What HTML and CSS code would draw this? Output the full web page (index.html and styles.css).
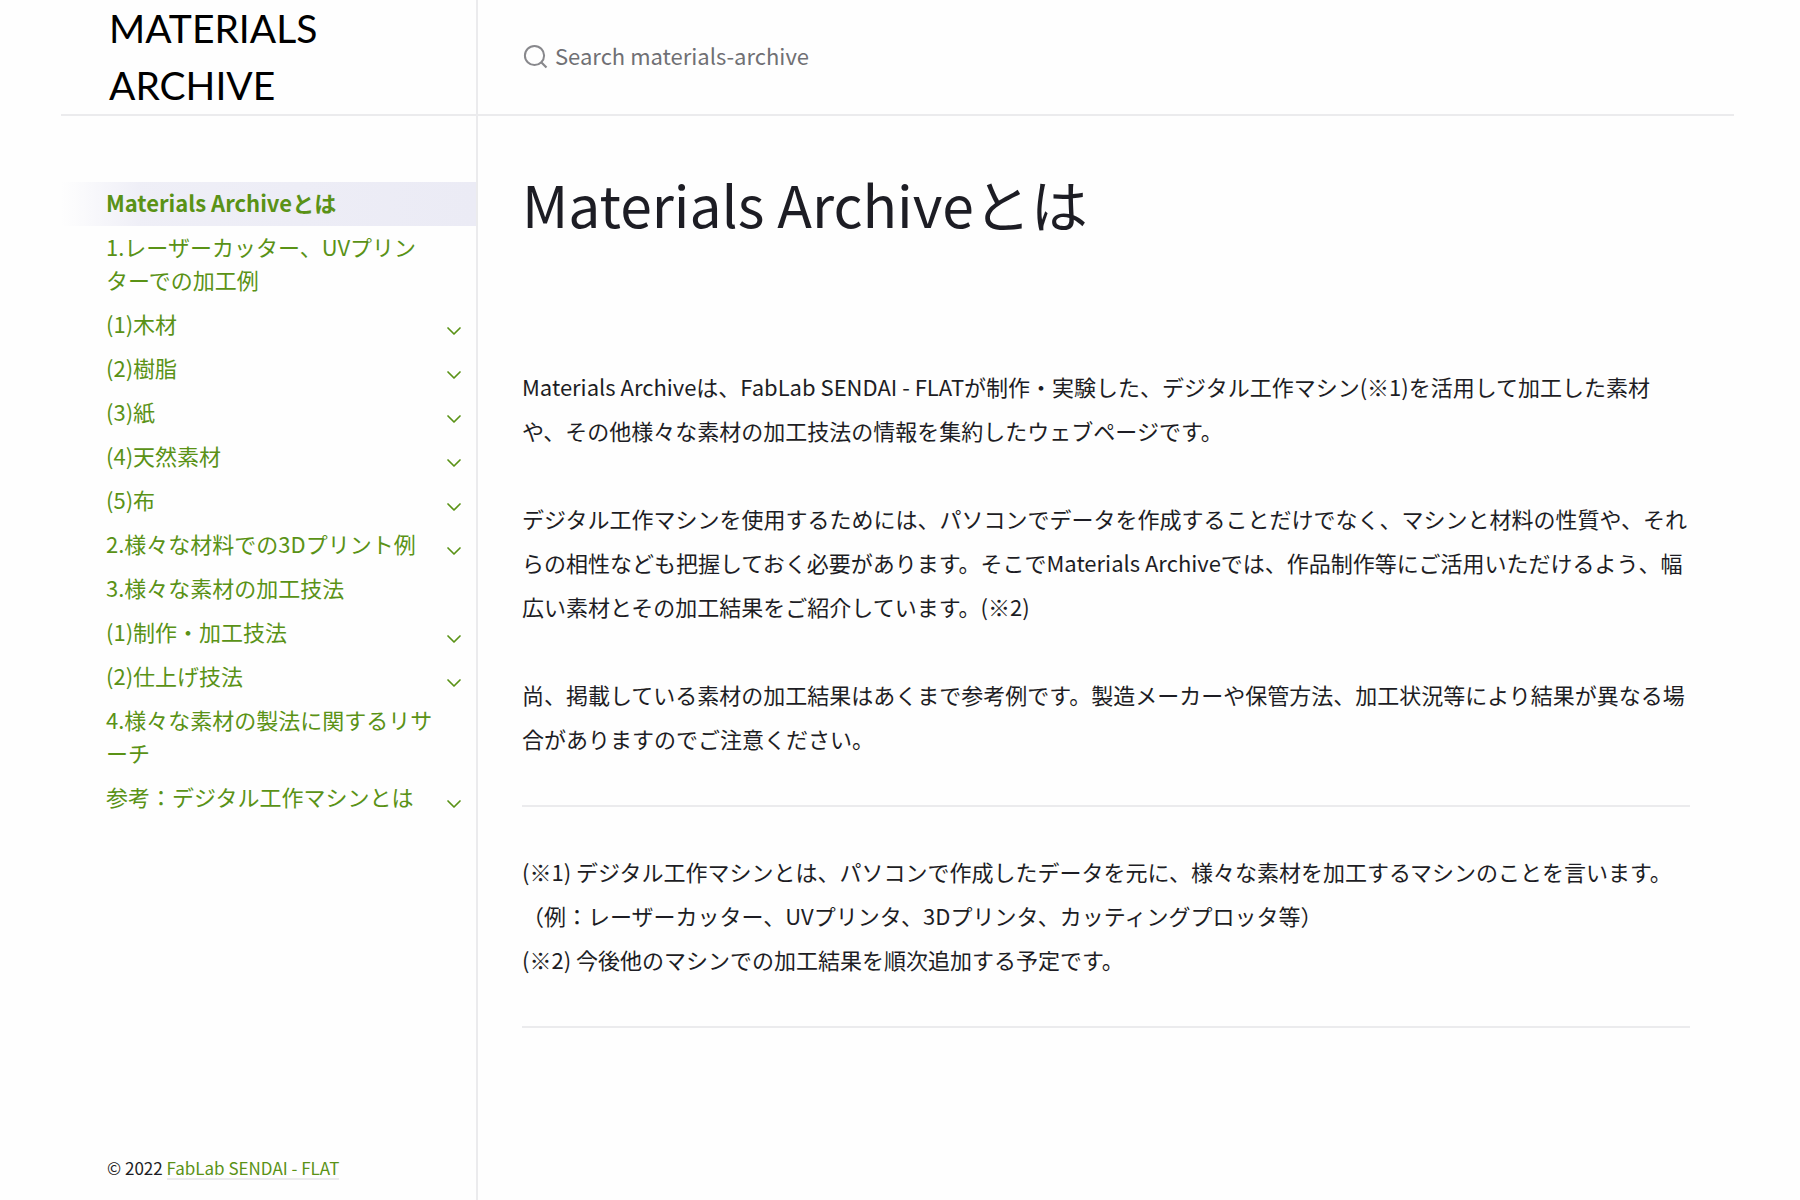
FILE: index.html
```html
<!DOCTYPE html>
<html lang="ja">
<head>
<meta charset="utf-8">
<meta name="viewport" content="width=device-width, initial-scale=1">
<title>Materials Archiveとは</title>
<link rel="stylesheet" href="styles.css">
</head>
<body>
<svg class="symbols" aria-hidden="true">
  <symbol id="chevron" viewBox="0 0 16 16"><path d="M2 5l6 6 6-6" fill="none" stroke="currentColor" stroke-width="1.7" stroke-linecap="round" stroke-linejoin="round"/></symbol>
</svg>
<div class="page">
  <aside class="sidebar">
    <div class="brand"><a class="brand-link" href="#">MATERIALS ARCHIVE</a></div>
    <nav class="nav" aria-label="メニュー">
      <ul class="nav-list">
        <li class="nav-item active"><a class="nav-link" href="#" aria-current="page">Materials Archiveとは</a></li>
        <li class="nav-item"><a class="nav-link" href="#">1.レーザーカッター、UVプリンターでの加工例</a></li>
        <li class="nav-item"><a class="nav-link" href="#">(1)木材</a><button class="toggle" type="button" aria-label="(1)木材を開く"><svg class="chevron"><use href="#chevron"/></svg></button></li>
        <li class="nav-item"><a class="nav-link" href="#">(2)樹脂</a><button class="toggle" type="button" aria-label="(2)樹脂を開く"><svg class="chevron"><use href="#chevron"/></svg></button></li>
        <li class="nav-item"><a class="nav-link" href="#">(3)紙</a><button class="toggle" type="button" aria-label="(3)紙を開く"><svg class="chevron"><use href="#chevron"/></svg></button></li>
        <li class="nav-item"><a class="nav-link" href="#">(4)天然素材</a><button class="toggle" type="button" aria-label="(4)天然素材を開く"><svg class="chevron"><use href="#chevron"/></svg></button></li>
        <li class="nav-item"><a class="nav-link" href="#">(5)布</a><button class="toggle" type="button" aria-label="(5)布を開く"><svg class="chevron"><use href="#chevron"/></svg></button></li>
        <li class="nav-item"><a class="nav-link" href="#">2.様々な材料での3Dプリント例</a><button class="toggle" type="button" aria-label="3Dプリント例を開く"><svg class="chevron"><use href="#chevron"/></svg></button></li>
        <li class="nav-item"><a class="nav-link" href="#">3.様々な素材の加工技法</a></li>
        <li class="nav-item"><a class="nav-link" href="#">(1)制作・加工技法</a><button class="toggle" type="button" aria-label="(1)制作・加工技法を開く"><svg class="chevron"><use href="#chevron"/></svg></button></li>
        <li class="nav-item"><a class="nav-link" href="#">(2)仕上げ技法</a><button class="toggle" type="button" aria-label="(2)仕上げ技法を開く"><svg class="chevron"><use href="#chevron"/></svg></button></li>
        <li class="nav-item"><a class="nav-link" href="#">4.様々な素材の製法に関するリサーチ</a></li>
        <li class="nav-item"><a class="nav-link" href="#">参考：デジタル工作マシンとは</a><button class="toggle" type="button" aria-label="参考を開く"><svg class="chevron"><use href="#chevron"/></svg></button></li>
      </ul>
    </nav>
    <footer class="copyright">© 2022 <a class="copyright-link" href="#">FabLab SENDAI - FLAT</a></footer>
  </aside>
  <div class="main">
    <header class="topbar">
      <label class="search">
        <svg class="search-icon" viewBox="0 0 24 24" aria-hidden="true"><circle cx="12.5" cy="10.5" r="9.6" fill="none" stroke="currentColor" stroke-width="2"/><path d="M19 17l5.500 5.500" fill="none" stroke="currentColor" stroke-width="2.200"/></svg>
        <input class="search-input" type="search" placeholder="Search materials-archive" aria-label="Search materials-archive">
      </label>
    </header>
    <main class="content">
      <h1 class="title">Materials Archiveとは</h1>
      <p class="text">Materials Archiveは、FabLab SENDAI - FLATが制作・実験した、デジタル工作マシン(※1)を活用して加工した素材や、その他様々な素材の加工技法の情報を集約したウェブページです。</p>
      <p class="text">デジタル工作マシンを使用するためには、パソコンでデータを作成することだけでなく、マシンと材料の性質や、それらの相性なども把握しておく必要があります。そこでMaterials Archiveでは、作品制作等にご活用いただけるよう、幅広い素材とその加工結果をご紹介しています。(※2)</p>
      <p class="text">尚、掲載している素材の加工結果はあくまで参考例です。製造メーカーや保管方法、加工状況等により結果が異なる場合がありますのでご注意ください。</p>
      <hr class="rule">
      <p class="text">(※1) デジタル工作マシンとは、パソコンで作成したデータを元に、様々な素材を加工するマシンのことを言います。<br>（例：レーザーカッター、UVプリンタ、3Dプリンタ、カッティングプロッタ等）<br>(※2) 今後他のマシンでの加工結果を順次追加する予定です。</p>
      <hr class="rule">
    </main>
  </div>
</div>
</body>
</html>
```
FILE: styles.css
```css
* { box-sizing: border-box; }

body {
  margin: 0;
  background: #fefefe;
  color: #1d1d24;
  font: 22px/44px "Noto Sans CJK JP", sans-serif;
}

a { color: #5a9216; text-decoration: none; }

.symbols { display: none; }

.page {
  display: flex;
  min-height: 100vh;
  padding: 0 66px 0 61px;
}

.sidebar {
  display: flex;
  flex-direction: column;
  flex: 0 0 417px;
  border-right: 2px solid #ebebed;
}

.brand, .topbar {
  height: 116px;
  border-bottom: 2px solid #ebebed;
}

.brand {
  padding: 0 100px 0 48px;
  font: 39px/57px Lato, sans-serif;
}

.brand-link { color: #000; }

.nav { padding-top: 66px; }

.nav-list { margin: 0; padding: 0; list-style: none; }

.nav-item {
  display: flex;
  align-items: flex-start;
  justify-content: space-between;
  min-height: 44px;
  padding: 4px 14px 7px 45px;
  line-height: 33px;
}

.nav-item.active {
  background: linear-gradient(90deg, rgba(235, 235, 245, 0), rgba(235, 235, 245, .8) 80px, #ebebf5);
  font-weight: 700;
}

.nav-link { max-width: 328px; }

.toggle {
  display: flex;
  flex: none;
  margin: 0;
  padding: 16px 0 0;
  border: 0;
  background: none;
  color: #5a9216;
}

.chevron { width: 16px; height: 16px; }

.copyright {
  margin-top: auto;
  padding: 0 46px 20px;
  font-size: 17px;
  line-height: 22px;
}

.copyright-link {
  display: inline-block;
  border-bottom: 2px solid #ebebed;
  line-height: 20px;
}

.main { flex: 1; min-width: 0; }

.topbar { display: flex; align-items: center; padding-left: 44px; }

.search { display: flex; flex: 1; align-items: center; gap: 9px; }

.search-icon { width: 24px; height: 24px; color: #88888c; overflow: visible; }

.search-input {
  flex: 1;
  padding: 0 0 4px;
  border: 0;
  outline: 0;
  background: none;
  font: inherit;
  line-height: 32px;
}

.search-input::placeholder { color: #707074; opacity: 1; }

.content { padding: 43px 44px; }

.title {
  margin: 0 0 117px;
  font-size: 57px;
  font-weight: 400;
  line-height: 88px;
}

.text { margin: 0 0 44px; }

.rule {
  height: 2px;
  margin: 45px 0 42px;
  border: 0;
  background: #ebebed;
}
```
